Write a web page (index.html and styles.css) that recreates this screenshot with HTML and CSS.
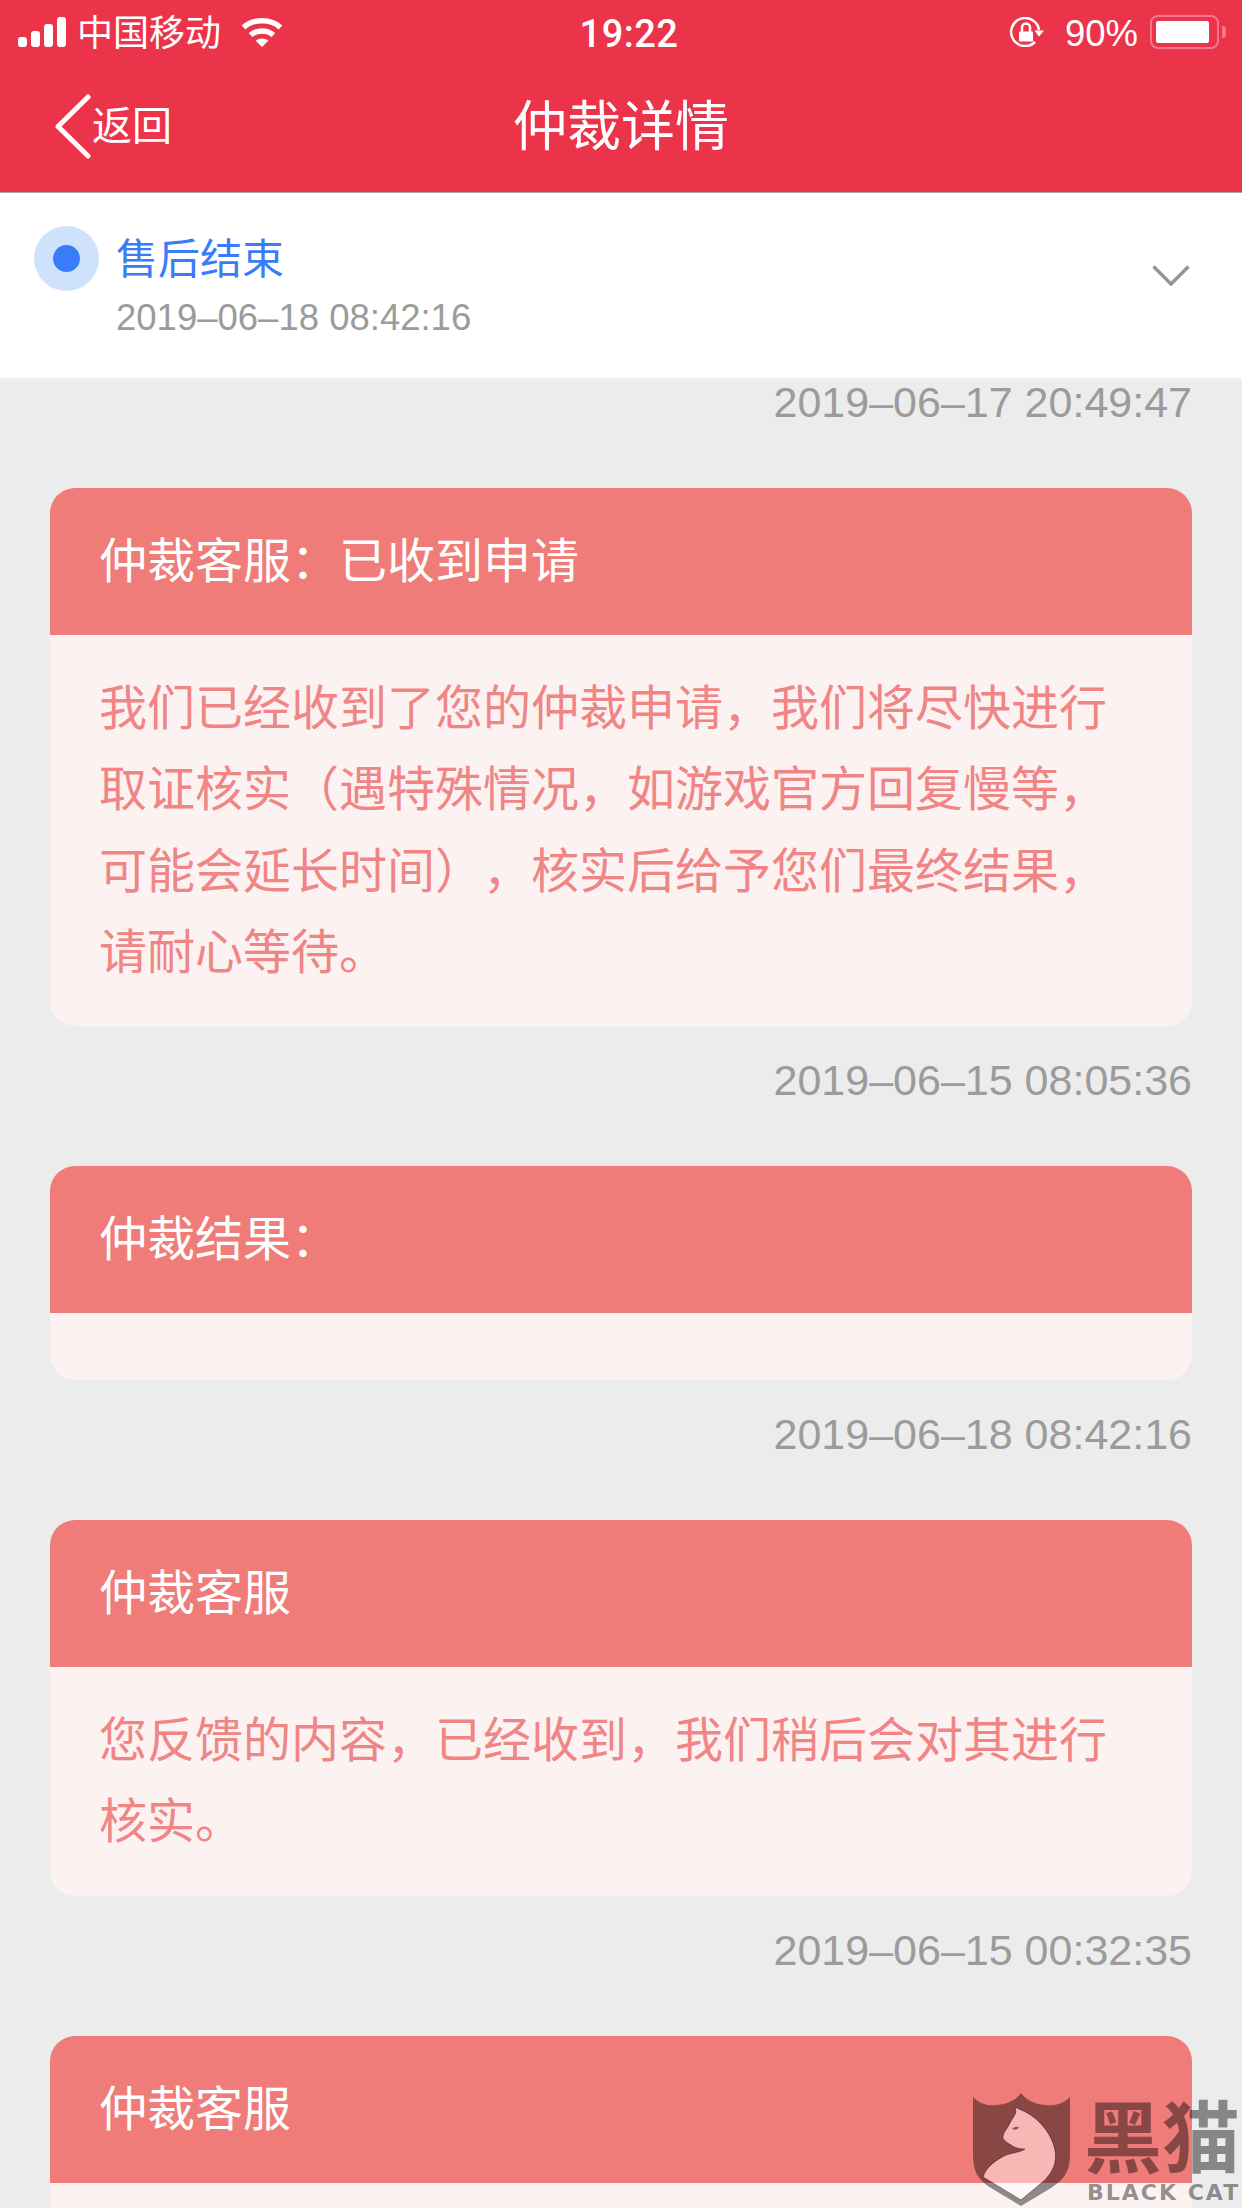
FILE: index.html
```html
<!DOCTYPE html>
<html lang="zh-CN">
<head>
<meta charset="utf-8">
<title>仲裁详情</title>
<link rel="stylesheet" href="styles.css">
</head>
<body>
<div class="page">
  <header class="top">
    <div class="status">
      <div class="status-left">
        <svg class="signal" width="48" height="30" viewBox="0 0 48 30"><rect x="0" y="20" width="9" height="10" rx="3"/><rect x="13" y="14" width="9" height="16" rx="3"/><rect x="26" y="7" width="9" height="23" rx="3"/><rect x="39" y="0" width="9" height="30" rx="3"/></svg>
        <span class="carrier">中国移动</span>
        <svg class="wifi" width="42" height="30" viewBox="0 0 42 30"><path class="wifi-arc" d="M2.500 10.500C12 1.500 30 1.500 39.500 10.500"/><path class="wifi-arc" d="M9.500 18C16 12.500 26 12.500 32.500 18"/><path class="wifi-dot" d="M14.500 23.500Q21 19.500 27.500 23.500L21 30Z"/></svg>
      </div>
      <div class="time">19:22</div>
      <div class="status-right">
        <svg class="lock" width="35" height="30" viewBox="0 0 35 30"><path class="lock-arc" d="M30 13A14 14 0 1 0 26 25"/><path class="lock-fill" d="M25.500 13.500H35L30 19.500Z"/><rect class="lock-fill" x="10" y="14.500" width="14" height="10" rx="1"/><path class="lock-shackle" d="M13 15V10.500a4 4 0 0 1 8 0V15"/></svg>
        <span class="percent">90%</span>
        <div class="battery"><div class="battery-shell"><div class="battery-fill"></div></div><div class="battery-nub"></div></div>
      </div>
    </div>
    <nav class="nav">
      <div class="back">
        <svg width="36" height="65" viewBox="0 0 36 65"><path d="M33 3L3 32.500L33 62"/></svg>
        <span>返回</span>
      </div>
      <h1 class="title">仲裁详情</h1>
      <div class="nav-side"></div>
    </nav>
  </header>

  <section class="state">
    <div class="state-dot"><span></span></div>
    <div class="state-text">
      <div class="state-name">售后结束</div>
      <div class="state-date">2019–06–18 08:42:16</div>
    </div>
    <svg class="state-chevron" width="38" height="21" viewBox="0 0 38 21"><path d="M1.500 1.500L19 19L36.500 1.500"/></svg>
  </section>

  <main class="list">
    <div class="stamp">2019–06–17 20:49:47</div>
    <article class="card">
      <h2 class="card-head">仲裁客服：已收到申请</h2>
      <p class="card-body">我们已经收到了您的仲裁申请，我们将尽快进行取证核实（遇特殊情况，如游戏官方回复慢等，可能会延长时间），核实后给予您们最终结果，请耐心等待。</p>
    </article>
    <div class="stamp">2019–06–15 08:05:36</div>
    <article class="card">
      <h2 class="card-head">仲裁结果：</h2>
      <p class="card-body"></p>
    </article>
    <div class="stamp">2019–06–18 08:42:16</div>
    <article class="card">
      <h2 class="card-head">仲裁客服</h2>
      <p class="card-body">您反馈的内容，已经收到，我们稍后会对其进行核实。</p>
    </article>
    <div class="stamp">2019–06–15 00:32:35</div>
    <article class="card">
      <h2 class="card-head">仲裁客服</h2>
      <p class="card-body"></p>
    </article>
  </main>

  <div class="mark">
    <svg class="mark-shield" width="97" height="113" viewBox="0 0 97 113">
      <path class="mark-dark" fill-rule="evenodd" d="M0 4C8 12 16 13 24 12C35 11 43 7 48 0C53 7 61 11 72 12C80 13 89 12 97 4V61C97 80 90 87 78 95L48 113L18 95C6 87 0 80 0 61Z M42 14L48 17C62 22 78 38 82 57C84 70 80 78 72 87L48 107L10 84C13 74 23 67 33 62C39 60 48 59 52 56C46 56 42 55 38 52C33 49 29 46 30 43C31 38 35 35 37 30C39 26 42 22 43 19Z"/>
      <path class="mark-light" d="M42 14L48 17C62 22 78 38 82 57C84 70 80 78 72 87L48 107L10 84C13 74 23 67 33 62C39 60 48 59 52 56C46 56 42 55 38 52C33 49 29 46 30 43C31 38 35 35 37 30C39 26 42 22 43 19Z"/>
      <path class="mark-eye" d="M39 36Q42 33 46 34Q44 38 39 36Z"/>
    </svg>
    <div class="mark-text">
      <div class="mark-cn">黑猫</div>
      <div class="mark-en">BLACK CAT</div>
    </div>
  </div>
</div>
</body>
</html>
```
FILE: styles.css
```css
* { box-sizing: border-box; }
html, body { margin: 0; padding: 0; }
body { font-family: "Liberation Sans", "Noto Sans CJK SC", sans-serif; background: #ececec; }
.page {
  position: relative;
  width: 1242px;
  height: 2208px;
  overflow: hidden;
  background: #ececec;
  text-spacing-trim: space-all;
}

.top { position: relative; z-index: 2; height: 193px; background: #eb344a; border-bottom: 1px solid #b0a8a8; color: #fff; }
.status { display: grid; grid-template-columns: 1fr auto 1fr; align-items: center; height: 60px; padding: 0 16px 0 18px; }
.status-left { display: flex; align-items: center; }
.signal { fill: #fff; }
.carrier { margin-left: 11px; padding-top: 4px; font-size: 36px; line-height: 60px; }
.wifi { margin-left: 20px; }
.wifi-arc { fill: none; stroke: #fff; stroke-width: 5.5; }
.wifi-dot { fill: #fff; }
.time { padding: 3px 0 0 14px; font-family: Roboto, sans-serif; font-weight: 500; font-size: 38px; letter-spacing: .5px; line-height: 60px; }
.status-right { display: flex; align-items: center; justify-content: flex-end; }
.lock-arc { fill: none; stroke: #fff; stroke-width: 2.500; }
.lock-fill { fill: #fff; }
.lock-shackle { fill: none; stroke: #fff; stroke-width: 2.500; }
.percent { margin-left: 21px; padding-top: 4px; font-size: 36.500px; line-height: 60px; }
.battery { display: flex; align-items: center; margin-left: 12px; }
.battery-shell { width: 69px; height: 34px; padding: 4px; border: 2px solid #f5778f; border-radius: 8px; }
.battery-fill { width: 53px; height: 22px; margin-left: 0; background: #fff; border-radius: 2px; }
.battery-nub { width: 4px; height: 12px; margin-left: 3px; background: #f5778f; border-radius: 0 4px 4px 0; }

.nav { display: grid; grid-template-columns: 1fr auto 1fr; align-items: center; height: 132px; padding: 0 55px; }
.back { display: flex; align-items: center; }
.back svg { flex: none; }
.back path { fill: none; stroke: #fff; stroke-width: 5; stroke-linecap: round; stroke-linejoin: round; }
.back span { margin-left: 1px; font-size: 40px; line-height: 60px; }
.title { margin: 0; padding-top: 2px; font-size: 54px; font-weight: 400; line-height: 70px; }

.state { position: relative; z-index: 2; display: flex; align-items: flex-start; height: 189px; padding: 33px 52px 0 34px; background: #fff; border-bottom: 4px solid #f0f0f3; }
.state-dot { display: flex; flex: none; align-items: center; justify-content: center; width: 65px; height: 65px; background: #cfe2fd; border-radius: 50%; }
.state-dot span { display: block; width: 27px; height: 27px; background: #3a7cf8; border-radius: 50%; }
.state-text { flex: 1; margin: 4px 0 0 17px; }
.state-name { font-size: 42px; line-height: 60px; color: #3a7cf8; }
.state-date { margin-top: 2px; font-size: 36.500px; line-height: 52px; color: #9b9b9b; }
.state-chevron { flex: none; margin-top: 39px; }
.state-chevron path { fill: none; stroke: #959595; stroke-width: 3.500; }

.list { margin-top: -34px; padding: 0 50px; }
.stamp { height: 140px; padding-top: 24px; font-size: 43px; line-height: 60px; color: #9b9b9b; text-align: right; }
.card { overflow: hidden; background: #fcf2f1; border-radius: 25px; }
.card-head { height: 147px; margin: 0; padding: 0 49px; background: #ef7c78; color: #fff; font-size: 48px; font-weight: 400; line-height: 147px; }
.card-body { min-height: 67px; margin: 0; padding: 33px 49px; color: #ef8585; font-size: 48px; line-height: 81.300px; }

.mark { position: absolute; left: 973px; top: 2093px; display: flex; align-items: flex-start; }
.mark-dark { fill: rgba(0, 0, 0, .43); }
.mark-light { fill: rgba(255, 255, 255, .45); stroke: rgba(0, 0, 0, .43); stroke-width: 1; }
.mark-eye { fill: rgba(0, 0, 0, .5); }
.mark-shield { flex: none; }
.mark-text { margin-left: 17px; }
.mark-cn { margin: 7px 0 0 -3px; font-size: 78px; font-weight: 700; line-height: 80px; color: rgba(0, 0, 0, .43); white-space: nowrap; }
.mark-en { margin-top: 3px; font-family: "DejaVu Sans", sans-serif; font-size: 22px; font-weight: 700; line-height: 20px; letter-spacing: 2px; color: rgba(0, 0, 0, .43); white-space: nowrap; }
```
